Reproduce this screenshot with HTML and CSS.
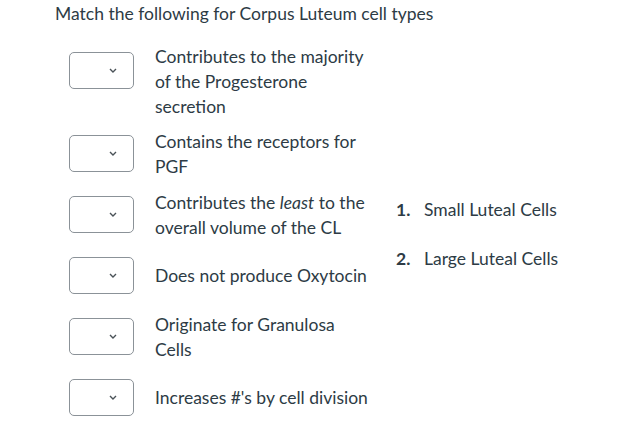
FILE: index.html
```html
<!DOCTYPE html>
<html lang="en">

<head>
  <meta charset="UTF-8">
  <meta name="viewport" content="width=device-width, initial-scale=1.0">
  <title>Matching Question</title>

  <link rel="stylesheet" href="styles.css">
</head>

<body>
  <div class="question">
    <p class="question-text">Match the following for Corpus Luteum cell types</p>

    <div class="match">
      <div class="match-list">
        <div class="match-row">
          <div class="pick"><svg class="chev" viewBox="0 0 8 5"><path d="M1 1 L4 4 L7 1" /></svg></div>
          <div class="prompt">Contributes to the majority of the Progesterone secretion</div>
        </div>
        <div class="match-row">
          <div class="pick"><svg class="chev" viewBox="0 0 8 5"><path d="M1 1 L4 4 L7 1" /></svg></div>
          <div class="prompt">Contains the receptors for PGF</div>
        </div>
        <div class="match-row">
          <div class="pick"><svg class="chev" viewBox="0 0 8 5"><path d="M1 1 L4 4 L7 1" /></svg></div>
          <div class="prompt">Contributes the <em>least</em> to the overall volume of the CL</div>
        </div>
        <div class="match-row">
          <div class="pick"><svg class="chev" viewBox="0 0 8 5"><path d="M1 1 L4 4 L7 1" /></svg></div>
          <div class="prompt">Does not produce Oxytocin</div>
        </div>
        <div class="match-row">
          <div class="pick"><svg class="chev" viewBox="0 0 8 5"><path d="M1 1 L4 4 L7 1" /></svg></div>
          <div class="prompt">Originate for Granulosa Cells</div>
        </div>
        <div class="match-row">
          <div class="pick"><svg class="chev" viewBox="0 0 8 5"><path d="M1 1 L4 4 L7 1" /></svg></div>
          <div class="prompt">Increases #'s by cell division</div>
        </div>
      </div>

      <ol class="answers">
        <li><span class="num">1.</span>Small Luteal Cells</li>
        <li><span class="num">2.</span>Large Luteal Cells</li>
      </ol>
    </div>
  </div>
</body>

</html>
```

FILE: styles.css
```css
body,
html {
  font-family: 'Lato', 'Liberation Sans', sans-serif;
  background-color: #fff;
  color: #2d3b45;

  padding: 0;
  margin: 0;
}

.question {
  padding: 0 0 0 55px;
}

.question-text {
  font-size: 17.5px;
  line-height: 25px;
  margin: 0;
  padding-top: 1px;
  height: 39px;
}

.match {
  display: flex;
  align-items: center;
}

.match-list {
  display: flex;
  flex-direction: column;
  padding-left: 14px;
}

.match-row {
  display: flex;
  align-items: center;

  min-height: 61px;
  padding: 4px 0;
  box-sizing: border-box;
}

.pick {
  align-self: flex-start;
  margin-top: 8px;

  display: flex;
  align-items: center;
  justify-content: flex-end;

  width: 63px;
  height: 35px;

  border: 1px solid #8b9298;
  border-radius: 5px;
}

.chev {
  width: 8px;
  height: 5px;
  margin-right: 16px;

  fill: none;
  stroke: #4a5258;
  stroke-width: 1.4;
}

.prompt {
  font-size: 17.5px;
  line-height: 25px;

  width: 216px;
  margin-left: 21px;
}

.answers {
  list-style: none;
  margin: 0 0 0 25px;
  padding: 0;
}

.answers li {
  font-size: 17.5px;
  line-height: 25px;
  margin-bottom: 24px;
}

.answers li:last-child {
  margin-bottom: 0;
}

.num {
  display: inline-block;
  width: 28px;
  font-weight: bold;
}
```
